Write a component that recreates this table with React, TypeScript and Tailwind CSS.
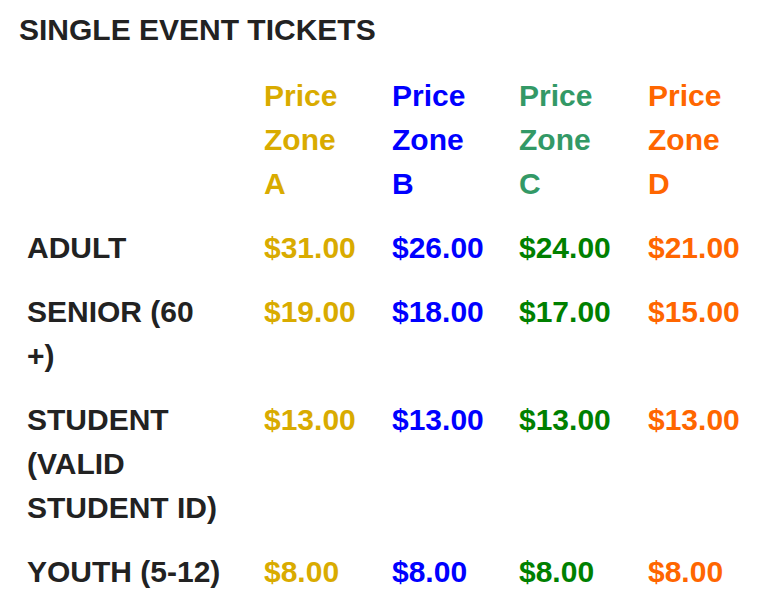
const zones = [
  { label: "A", head: "text-[#d9ab00]", price: "text-[#d9ab00]" },
  { label: "B", head: "text-[#0000ff]", price: "text-[#0000ff]" },
  { label: "C", head: "text-[#339966]", price: "text-[#008000]" },
  { label: "D", head: "text-[#ff6600]", price: "text-[#ff6600]" },
];

const rows = [
  { name: "ADULT", prices: ["$31.00", "$26.00", "$24.00", "$21.00"] },
  { name: "SENIOR (60 +)", prices: ["$19.00", "$18.00", "$17.00", "$15.00"] },
  { name: "STUDENT (VALID STUDENT ID)", prices: ["$13.00", "$13.00", "$13.00", "$13.00"] },
  { name: "YOUTH (5-12)", prices: ["$8.00", "$8.00", "$8.00", "$8.00"] },
];

function App() {
  return (
    <div className="min-h-screen bg-white font-['Liberation_Sans',Arial,sans-serif] font-bold text-[30px] text-[#222222]">
      <h2 className="pl-[19px] pt-[13px] leading-[33px]">SINGLE EVENT TICKETS</h2>

      <div className="mt-[18px] pl-[27px] grid grid-cols-[237px_128px_127px_129px_1fr] leading-[44px]">
        {/* header row */}
        <div className="py-[10px]"></div>
        {zones.map((z) => (
          <div key={z.label} className={`py-[10px] w-[100px] ${z.head}`}>
            Price Zone {z.label}
          </div>
        ))}

        {rows.map((r) => (
          <div key={r.name} className="contents">
            <div className="py-[10px] w-[197px]">{r.name}</div>
            {r.prices.map((p, i) => (
              <div key={i} className={`py-[10px] ${zones[i].price}`}>
                {p}
              </div>
            ))}
          </div>
        ))}
      </div>
    </div>
  );
}

export default App;
